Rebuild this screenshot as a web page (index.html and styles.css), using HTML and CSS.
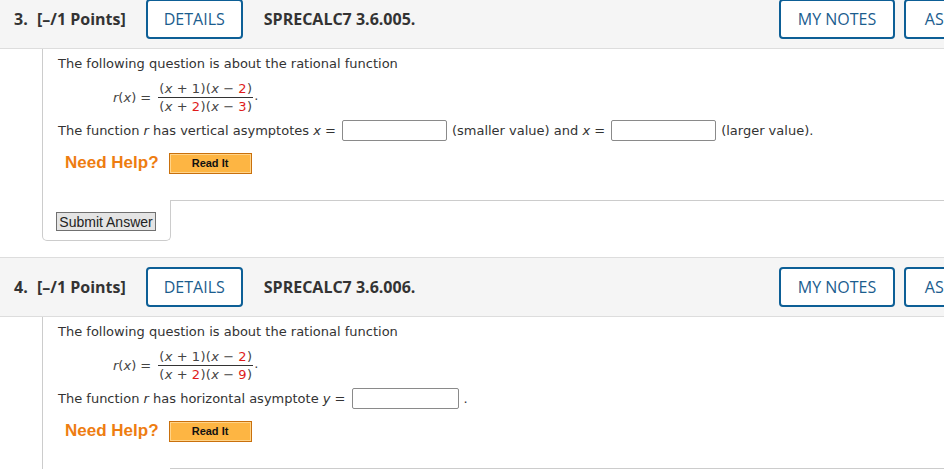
FILE: index.html
```html
<!DOCTYPE html>
<html lang="en">
<head>
    <meta charset="UTF-8">
    <title>Assignment</title>
    <link rel="stylesheet" href="styles.css">
</head>
<body>
<div class="page">

    <!-- question 3 -->
    <div class="question">
        <div class="qhead">
            <span class="qnum">3.</span>
            <span class="points">[&ndash;/1 Points]</span>
            <button type="button" class="hbtn details">DETAILS</button>
            <span class="code">SPRECALC7 3.6.005.</span>
            <div class="hright">
                <button type="button" class="hbtn notes">MY NOTES</button>
                <button type="button" class="hbtn ask">ASK YOUR TEACHER</button>
            </div>
        </div>
        <div class="qbody">
            <div class="qtext">
                <p class="intro">The following question is about the rational function</p>
                <div class="formula">
                    <span class="lhs"><i>r</i>(<i>x</i>) =</span>
                    <span class="frac">
                        <span class="num">(<i>x</i><span class="op">+</span>1)(<i>x</i><span class="op">&minus;</span><span class="red">2</span>)</span>
                        <span class="den">(<i>x</i><span class="op">+</span><span class="red">2</span>)(<i>x</i><span class="op">&minus;</span><span class="red">3</span>)</span>
                    </span>
                    <span class="dot">.</span>
                </div>
                <div class="answer">
                    <span>The function <i>r</i> has vertical asymptotes <i>x</i> =</span>
                    <input type="text" class="ans">
                    <span>(smaller value) and <i>x</i> =</span>
                    <input type="text" class="ans">
                    <span>(larger value).</span>
                </div>
                <div class="help">
                    <span class="needhelp">Need Help?</span>
                    <button type="button" class="readit">Read It</button>
                </div>
            </div>
            <div class="qfoot">
                <div class="tab">
                    <button type="button" class="submit">Submit Answer</button>
                </div>
                <div class="fill"></div>
            </div>
        </div>
    </div>

    <!-- question 4 -->
    <div class="question">
        <div class="qhead">
            <span class="qnum">4.</span>
            <span class="points">[&ndash;/1 Points]</span>
            <button type="button" class="hbtn details">DETAILS</button>
            <span class="code">SPRECALC7 3.6.006.</span>
            <div class="hright">
                <button type="button" class="hbtn notes">MY NOTES</button>
                <button type="button" class="hbtn ask">ASK YOUR TEACHER</button>
            </div>
        </div>
        <div class="qbody">
            <div class="qtext">
                <p class="intro">The following question is about the rational function</p>
                <div class="formula">
                    <span class="lhs"><i>r</i>(<i>x</i>) =</span>
                    <span class="frac">
                        <span class="num">(<i>x</i><span class="op">+</span>1)(<i>x</i><span class="op">&minus;</span><span class="red">2</span>)</span>
                        <span class="den">(<i>x</i><span class="op">+</span><span class="red">2</span>)(<i>x</i><span class="op">&minus;</span><span class="red">9</span>)</span>
                    </span>
                    <span class="dot">.</span>
                </div>
                <div class="answer">
                    <span>The function <i>r</i> has horizontal asymptote <i>y</i> =</span>
                    <input type="text" class="ans wide">
                    <span>.</span>
                </div>
                <div class="help">
                    <span class="needhelp">Need Help?</span>
                    <button type="button" class="readit">Read It</button>
                </div>
            </div>
            <div class="qfoot">
                <div class="tab">
                    <button type="button" class="submit">Submit Answer</button>
                </div>
                <div class="fill"></div>
            </div>
        </div>
    </div>

</div>
</body>
</html>
```

FILE: styles.css
```css
body {
    margin: 0;
    overflow: hidden;
    background: #fff;
    color: #333;
    font-family: "DejaVu Sans", Verdana, sans-serif;
    font-size: 13px;
}
.page {
    width: 1110px;
    margin-top: -11px; /* page is scrolled a little */
}

/* header bar of a question */
.qhead {
    display: flex;
    align-items: center;
    height: 58px;
    padding-left: 14px;
    background: #f5f5f5;
    border-top: 1px solid #ddd;
    border-bottom: 1px solid #ddd;
    font-family: "Open Sans", sans-serif;
    font-size: 16px;
    font-weight: 700;
    color: #333;
}
.qnum {
    width: 23px;
}
.points {
    margin-right: 20px;
}
.hbtn {
    height: 40px;
    padding: 0;
    background: #fff;
    border: 2px solid #0d5f96;
    border-radius: 4px;
    color: #1b5d8e;
    font-family: "Open Sans", sans-serif;
    font-size: 16px;
    font-weight: 400;
}
.details {
    width: 97px;
    margin-right: 21px;
}
.hright {
    display: flex;
    gap: 9px;
    margin-left: auto;
    padding-right: 16px;
}
.notes {
    width: 116px;
}
.ask {
    width: 190px;
}

/* question content */
.qbody {
    margin-left: 42px;
    padding-bottom: 16px;
}
.qtext {
    box-sizing: border-box;
    height: 151px;
    padding: 6px 0 0 15px;
    border-left: 1px solid #ccc;
}
.intro {
    margin: 0;
    line-height: 18px;
}
.formula {
    display: flex;
    align-items: center;
    margin: 7px 0 0 55px;
    color: #444;
}
.lhs {
    margin-right: 7px;
}
.frac {
    display: flex;
    flex-direction: column;
    align-items: center;
    letter-spacing: 0.3px;
}
.op {
    margin: 0 4px;
}
.num {
    line-height: 17px;
    padding: 0 1px;
    border-bottom: 1px solid #333;
}
.den {
    line-height: 17px;
}
.dot {
    margin: 0 0 4px 1px;
}
.red {
    color: #e01b1b;
}
.answer {
    display: flex;
    align-items: center;
    height: 23px;
    margin-top: 4px;
}
.ans {
    box-sizing: border-box;
    width: 105px;
    height: 21px;
    margin: 0 5px 0 6px;
    border: 1px solid #8a8a8a;
    border-radius: 2px;
    background: #fff;
}
.ans.wide {
    width: 107px;
}

.help {
    display: flex;
    align-items: center;
    height: 20px;
    margin: 11px 0 0 7px;
}
.needhelp {
    margin-right: 10px;
    color: #ee7d11;
    font-family: "Liberation Sans", Arial, sans-serif;
    font-size: 17px;
    font-weight: 700;
}
.readit {
    width: 83px;
    height: 21px;
    padding: 0;
    background: #fdb543;
    border: 1px solid #c9700c;
    box-shadow: inset 0 0 0 1px #ffd48a;
    color: #111;
    font-family: "Liberation Sans", Arial, sans-serif;
    font-size: 11px;
    font-weight: 700;
}

/* submit tab */
.qfoot {
    display: flex;
}
.tab {
    width: 114px;
    height: 28px;
    padding: 12px 0 0 13px;
    border: 1px solid #ccc;
    border-top: none;
    border-radius: 0 0 5px 5px;
}
.submit {
    width: 100px;
    height: 19px;
    padding: 0;
    background: #e4e4e4;
    border: 1px solid #707070;
    color: #222;
    font-family: "Liberation Sans", Arial, sans-serif;
    font-size: 14px;
}
.fill {
    flex: 1;
    border-top: 1px solid #ccc;
}
```
